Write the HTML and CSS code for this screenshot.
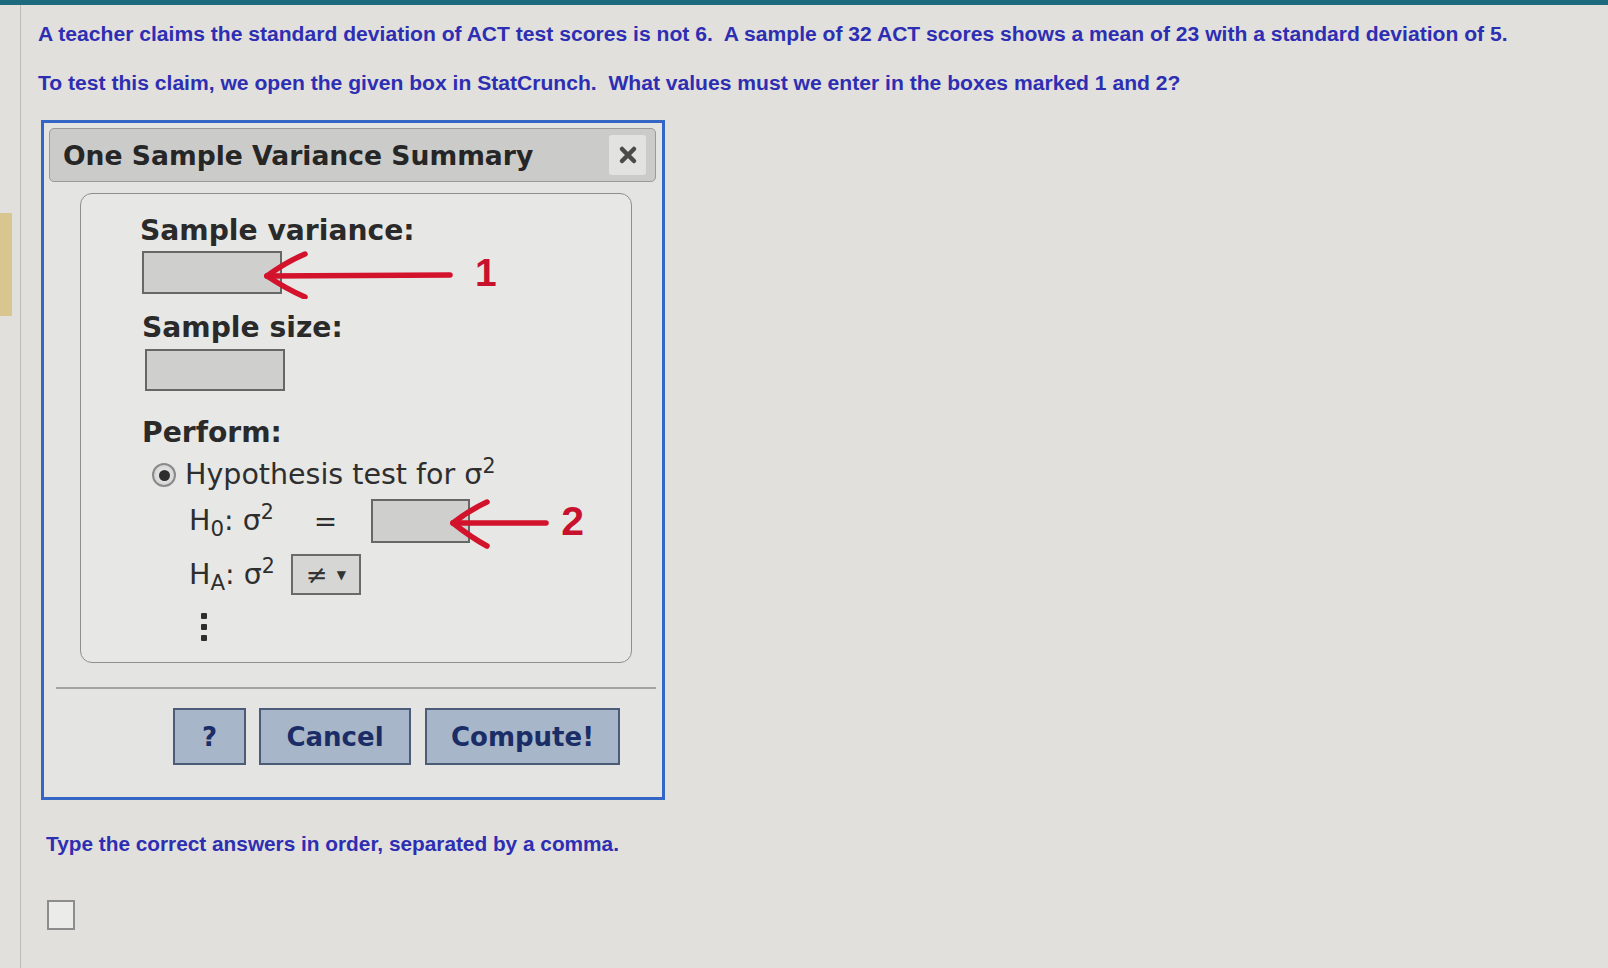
FILE: index.html
```html
<!DOCTYPE html>
<html>
<head>
<meta charset="utf-8">
<link rel="stylesheet" href="styles.css">
</head>
<body>
<div class="topbar"></div>
<div class="page">
  <div class="rail"><div class="marker"></div></div>
  <main class="content">
    <p class="q q1">A teacher claims the standard deviation of ACT test scores is not 6.&nbsp; A sample of 32 ACT scores shows a mean of 23 with a standard deviation of 5.</p>
    <p class="q q2">To test this claim, we open the given box in StatCrunch.&nbsp; What values must we enter in the boxes marked 1 and 2?</p>

    <div class="dialog">
      <div class="titlebar">
        <span class="title">One Sample Variance Summary</span>
        <span class="close">
          <svg width="20" height="20" viewBox="0 0 20 20"><path d="M4 4 L16 16 M16 4 L4 16" stroke="#4a4a4a" stroke-width="4.5" stroke-linecap="round"/></svg>
        </span>
      </div>
      <div class="panel">
        <div class="label l1">Sample variance:</div>
        <div class="field-row r1">
          <div class="input in1"></div>
          <svg class="arrow arrow1" width="195" height="52" viewBox="0 0 195 52">
            <path d="M6 29 L189 28" stroke="#d3122c" stroke-width="5.5" stroke-linecap="round" fill="none"/>
            <path d="M6 29 C18 20 30 13 44 7" stroke="#d3122c" stroke-width="5.5" stroke-linecap="round" fill="none"/>
            <path d="M6 29 C18 37 30 44 44 50" stroke="#d3122c" stroke-width="5.5" stroke-linecap="round" fill="none"/>
          </svg>
          <span class="num n1">1</span>
        </div>
        <div class="label l2">Sample size:</div>
        <div class="input in2"></div>
        <div class="label l3">Perform:</div>
        <div class="radio-row">
          <span class="radio"><span class="dot"></span></span>
          <span class="rtext">Hypothesis test for σ<span class="sup">2</span></span>
        </div>
        <div class="hrow h0">
          <span class="htext">H<span class="sub">0</span>: σ<span class="sup">2</span></span>
          <span class="eq">=</span>
          <div class="input in3"></div>
          <svg class="arrow arrow2" width="110" height="54" viewBox="0 0 110 54">
            <path d="M6 26 L99 26" stroke="#d3122c" stroke-width="5.5" stroke-linecap="round" fill="none"/>
            <path d="M6 26 C16 18 27 11 40 5" stroke="#d3122c" stroke-width="5.5" stroke-linecap="round" fill="none"/>
            <path d="M6 26 C16 34 27 42 40 49" stroke="#d3122c" stroke-width="5.5" stroke-linecap="round" fill="none"/>
          </svg>
          <span class="num n2">2</span>
        </div>
        <div class="hrow ha">
          <span class="htext">H<span class="sub">A</span>: σ<span class="sup">2</span></span>
          <div class="select"><span class="ne">≠</span><span class="tri">▼</span></div>
        </div>
        <div class="vdots"><span></span><span></span><span></span></div>
      </div>
      <div class="sep"></div>
      <div class="buttons">
        <button class="btn b-help">?</button>
        <button class="btn b-cancel">Cancel</button>
        <button class="btn b-compute">Compute!</button>
      </div>
    </div>

    <p class="q instr">Type the correct answers in order, separated by a comma.</p>
    <div class="answer"></div>
  </main>
</div>
</body>
</html>
```

FILE: styles.css
```css
html, body {
  margin: 0;
  padding: 0;
}
body {
  background: #e1e0dd;
  width: 1608px;
  height: 968px;
  overflow: hidden;
  font-family: "Liberation Sans", Arial, sans-serif;
}
.topbar {
  height: 5px;
  background: #1d6a7e;
}
.page {
  display: flex;
  height: 963px;
}
.rail {
  width: 20px;
  border-right: 1px solid #bdbcb8;
  flex: none;
}
.marker {
  margin-top: 208px;
  width: 12px;
  height: 103px;
  background: #d8c58f;
}
.content {
  padding-left: 17px;
  padding-top: 18px;
  flex: 1;
}
.q {
  margin: 0;
  font-weight: bold;
  font-size: 21.1px;
  line-height: 22px;
  color: #2e2eb2;
  white-space: nowrap;
}
.q1 { margin-bottom: 27px; }
.q2 { margin-bottom: 26px; }

.dialog {
  margin-left: 3px;
  width: 618px;
  border: 3px solid #3466c6;
  background: #e4e4e2;
  padding: 5px 0 32px 0;
  font-family: "DejaVu Sans", Verdana, sans-serif;
  color: #2b2b2b;
}
.titlebar {
  margin: 0 6px 0 5px;
  height: 52px;
  border: 1px solid #9a9a9a;
  border-radius: 5px;
  background: #cbcbca;
  display: flex;
  align-items: center;
  justify-content: space-between;
  padding: 0 9px 0 13px;
}
.title {
  font-weight: bold;
  font-size: 26.6px;
  color: #262626;
}
.close {
  width: 37px;
  height: 40px;
  background: #e2e2e1;
  border-radius: 3px;
  display: flex;
  align-items: center;
  justify-content: center;
}
.panel {
  margin: 11px 30px 0 36px;
  height: 446px;
  border: 1.5px solid #8e8e8e;
  border-radius: 12px;
  background: #e7e7e5;
  padding: 22px 0 0 59px;
  box-sizing: content-box;
  display: flex;
  flex-direction: column;
  align-items: flex-start;
}
.label {
  font-weight: bold;
  font-size: 28.2px;
  line-height: 30px;
  color: #2a2a2a;
}
.l2 { margin-top: 19px; margin-left: 2px; }
.l3 { margin-top: 27px; margin-left: 2px; }
.input {
  background: #cfcfce;
  border: 2px solid #676767;
  box-sizing: border-box;
}
.field-row {
  position: relative;
  display: flex;
  align-items: center;
  margin-top: 5px;
}
.in1 { width: 140px; height: 43px; margin-left: 2px; }
.in2 { width: 140px; height: 42px; margin-top: 6px; margin-left: 5px; }
.in3 { width: 99px; height: 44px; }
.arrow {
  position: absolute;
}
.arrow1 { left: 121px; top: -4px; }
.num {
  font-family: "Liberation Sans", Arial, sans-serif;
  font-weight: bold;
  font-size: 39px;
  color: #c8112d;
  line-height: 40px;
}
.n1 { margin-left: 193px; }
.radio-row {
  margin-top: 12px;
  margin-left: 12px;
  display: flex;
  align-items: center;
  height: 30px;
}
.radio {
  width: 24px;
  height: 24px;
  border: 2px solid #8a8a8a;
  border-radius: 50%;
  box-sizing: border-box;
  background: radial-gradient(circle, #f2f2f2 0%, #c9c9c9 100%);
  display: flex;
  align-items: center;
  justify-content: center;
}
.dot {
  width: 11px;
  height: 11px;
  border-radius: 50%;
  background: #2e2e2e;
}
.rtext {
  margin-left: 9px;
  font-size: 28.5px;
  line-height: 30px;
  color: #2e2e2e;
}
.sup {
  font-size: 0.72em;
  vertical-align: 0.55em;
  line-height: 0;
}
.sub {
  font-size: 0.75em;
  vertical-align: -0.3em;
  line-height: 0;
}
.hrow {
  display: flex;
  align-items: center;
  margin-left: 49px;
  position: relative;
}
.htext {
  font-size: 28.5px;
  line-height: 30px;
  color: #2e2e2e;
}
.h0 { margin-top: 9px; height: 44px; }
.eq {
  font-size: 28px;
  margin-left: 40px;
  margin-right: 34px;
  color: #2e2e2e;
}
.arrow2 { left: 258px; top: -2px; }
.n2 { margin-left: 91px; font-size: 41px; }
.ha { margin-top: 11px; }
.select {
  margin-left: 16px;
  width: 70px;
  height: 41px;
  box-sizing: border-box;
  border: 2px solid #6a6a6a;
  background: #d6d6d5;
  display: flex;
  align-items: center;
  justify-content: center;
  gap: 9px;
  color: #333;
}
.ne { font-size: 26px; }
.tri { font-size: 12px; }
.vdots {
  margin-top: 18px;
  margin-left: 61px;
  display: flex;
  flex-direction: column;
  gap: 5px;
}
.vdots span {
  width: 6px;
  height: 6px;
  border-radius: 1px;
  background: #2e2e2e;
}
.sep {
  margin: 24px 6px 0 12px;
  height: 2px;
  background: #a3a3a2;
}
.buttons {
  margin-top: 19px;
  padding-left: 129px;
  display: flex;
  gap: 13px;
}
.btn {
  height: 57px;
  border: 2px solid #4c5b78;
  background: #a8b6c9;
  color: #1b2d66;
  font-family: "DejaVu Sans", Verdana, sans-serif;
  font-weight: bold;
  font-size: 26px;
  padding: 0;
  box-sizing: border-box;
}
.b-help { width: 73px; }
.b-cancel { width: 152px; }
.b-compute { width: 195px; margin-left: 1px; }
.instr {
  margin-top: 33px;
  margin-left: 8px;
  font-size: 20.8px;
}
.answer {
  margin-top: 45px;
  margin-left: 9px;
  width: 28px;
  height: 30px;
  box-sizing: border-box;
  border: 2px solid #8c8c8c;
  background: #ebebea;
}
```
